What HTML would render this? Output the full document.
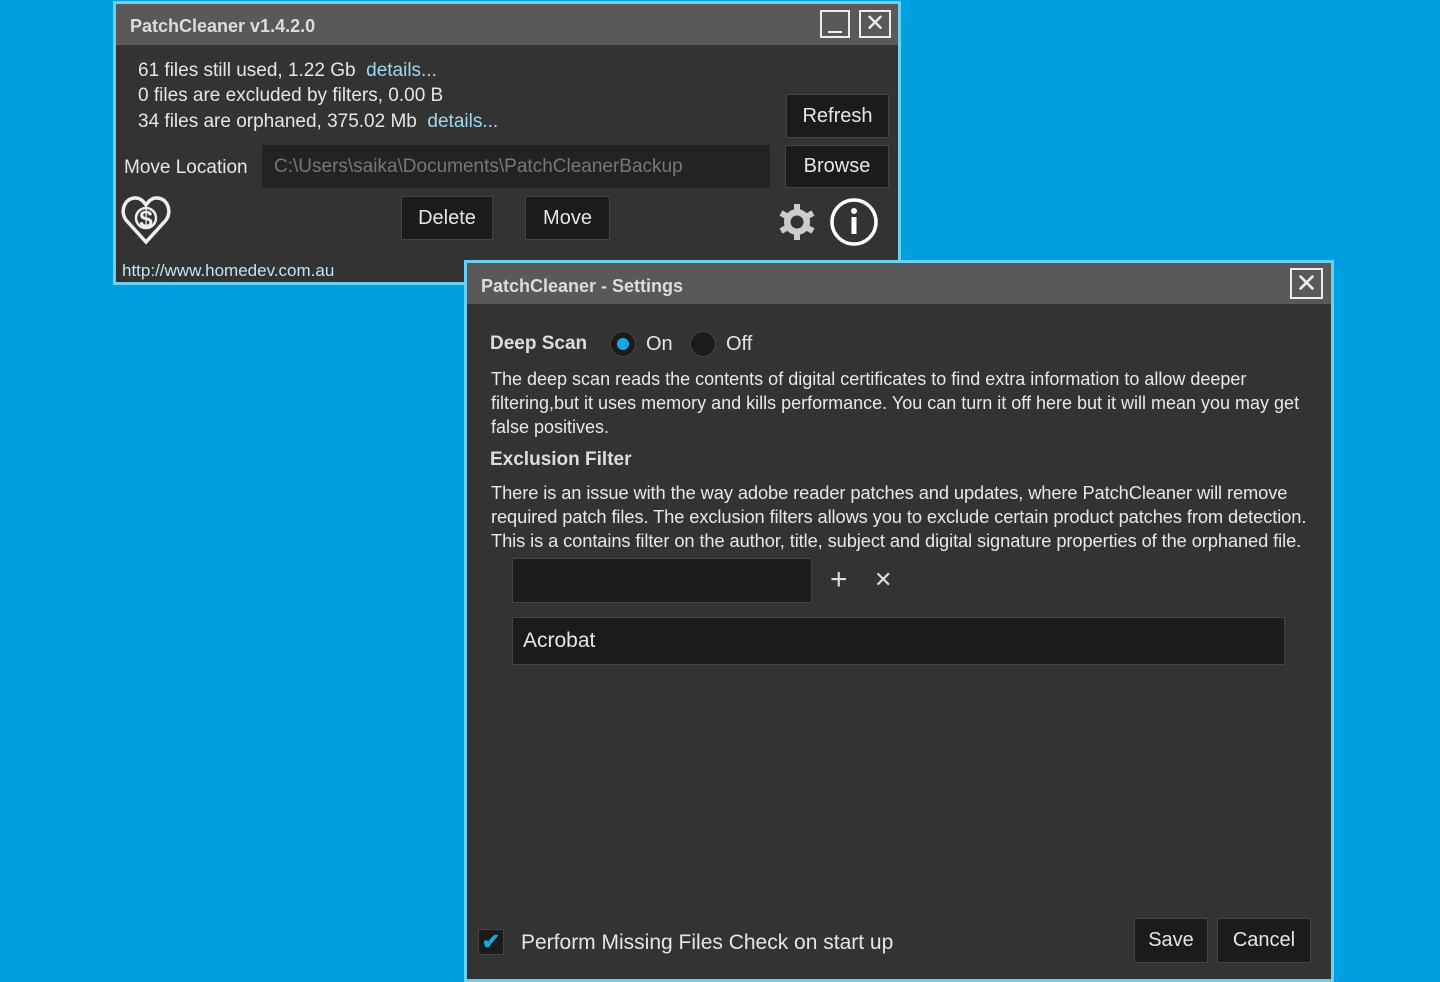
<!DOCTYPE html>
<html><head><style>
body{margin:0;width:1440px;height:980px;background:#009fe0;position:relative;overflow:hidden;font-family:"Liberation Sans",sans-serif;color:#e6e6e6}
.a{position:absolute}
.win{position:absolute;background:#333;border:3px solid #6cd0f2;box-sizing:border-box}
.tb{position:absolute;left:0;right:0;top:0;height:41px;background:#595959;color:#ddd;font-size:18px;font-weight:bold}
.btn{position:absolute;background:#1b1b1b;border:1px solid #444;color:#e6e6e6;font-size:20px;display:flex;align-items:center;justify-content:center;box-sizing:border-box}
.lnk{color:#9fd8ef}
.t{position:absolute;font-size:19px;white-space:nowrap}
.p{position:absolute;font-size:18px;line-height:24px;color:#e8e8e8;white-space:nowrap}
</style></head><body>
<div class="win" style="left:113px;top:1px;width:788px;height:284px">
 <div class="tb"><span class="a" style="left:14px;top:12px">PatchCleaner v1.4.2.0</span>
  <div class="a" style="left:704px;top:6px;width:30px;height:28px;border:2px solid #eee;box-sizing:border-box"><div class="a" style="left:6px;bottom:3px;width:14px;height:2px;background:#eee"></div></div>
  <div class="a" style="left:743px;top:6px;width:32px;height:28px;border:2px solid #eee;box-sizing:border-box;color:#eee;font-size:24px;line-height:24px;text-align:center;font-weight:normal">✕</div>
 </div>
 <div class="t" style="left:22px;top:56px">61 files still used, 1.22 Gb &nbsp;<span class="lnk">details...</span></div>
 <div class="t" style="left:22px;top:81px">0 files are excluded by filters, 0.00 B</div>
 <div class="t" style="left:22px;top:107px">34 files are orphaned, 375.02 Mb &nbsp;<span class="lnk">details...</span></div>
 <div class="btn" style="left:670px;top:90px;width:103px;height:44px">Refresh</div>
 <div class="t" style="left:8px;top:153px">Move Location</div>
 <div class="a" style="left:146px;top:141px;width:508px;height:43px;background:#232323;color:#777;font-size:19px;line-height:43px;padding-left:12px;box-sizing:border-box;white-space:nowrap;overflow:hidden">C:\Users\saika\Documents\PatchCleanerBackup</div>
 <div class="btn" style="left:669px;top:141px;width:104px;height:43px">Browse</div>
 <div class="btn" style="left:285px;top:192px;width:92px;height:44px">Delete</div>
 <div class="btn" style="left:409px;top:192px;width:85px;height:44px">Move</div>
 <svg class="a" style="left:5px;top:190px" width="50" height="52" viewBox="0 0 50 52"><path d="M25 48 L5 26 C-2 16 5 3 15 4 C20 4 23 8 25 11 C27 8 30 4 35 4 C45 3 52 16 45 26 Z" fill="none" stroke="#eee" stroke-width="3.5"/><text x="25" y="33" font-size="24" font-weight="bold" fill="#eee" text-anchor="middle" font-family="Liberation Sans">$</text><circle cx="25" cy="24" r="10" fill="none" stroke="#eee" stroke-width="2.5"/></svg>
 <svg class="a" style="left:661px;top:197px" width="40" height="42" viewBox="0 0 40 42"><g fill="#ccc"><circle cx="20" cy="21" r="13"/><g stroke="#ccc" stroke-width="6"><line x1="20" y1="3" x2="20" y2="39"/><line x1="4" y1="12" x2="36" y2="30"/><line x1="4" y1="30" x2="36" y2="12"/></g></g><circle cx="20" cy="21" r="6.5" fill="#333"/></svg>
 <svg class="a" style="left:713px;top:193px" width="50" height="50" viewBox="0 0 50 50"><circle cx="25" cy="25" r="22" fill="none" stroke="#fff" stroke-width="3.5"/><circle cx="25" cy="14" r="3" fill="#fff"/><rect x="22.5" y="20" width="5" height="17" fill="#fff"/></svg>
 <div class="t lnk" style="left:6px;top:257px;font-size:17px;color:#bfe6f6">http://www.homedev.com.au</div>
</div>

<div class="win" style="left:464px;top:260px;width:870px;height:722px">
 <div class="tb"><span class="a" style="left:14px;top:13px">PatchCleaner - Settings</span>
  <div class="a" style="left:823px;top:5px;width:33px;height:31px;border:2px solid #eee;box-sizing:border-box;color:#eee;font-size:26px;line-height:27px;text-align:center;font-weight:normal">✕</div>
 </div>
 <div class="t" style="left:23px;top:70px;font-weight:bold;color:#ddd">Deep Scan</div>
 <div class="a" style="left:143px;top:68px;width:26px;height:26px;border-radius:50%;background:#1b1b1b;border:1px solid #444;box-sizing:border-box"><div class="a" style="left:6px;top:6px;width:12px;height:12px;border-radius:50%;background:#1aa5e0"></div></div>
 <div class="t" style="left:179px;top:70px;font-size:20px">On</div>
 <div class="a" style="left:223px;top:68px;width:26px;height:26px;border-radius:50%;background:#1b1b1b;border:1px solid #444;box-sizing:border-box"></div>
 <div class="t" style="left:259px;top:70px;font-size:20px">Off</div>
 <div class="p" style="left:24px;top:104px">The deep scan reads the contents of digital certificates to find extra information to allow deeper<br>filtering,but it uses memory and kills performance. You can turn it off here but it will mean you may get<br>false positives.</div>
 <div class="t" style="left:23px;top:186px;font-weight:bold;color:#ddd">Exclusion Filter</div>
 <div class="p" style="left:24px;top:218px;font-size:18.3px;letter-spacing:-0.1px">There is an issue with the way adobe reader patches and updates, where PatchCleaner will remove<br>required patch files. The exclusion filters allows you to exclude certain product patches from detection.<br>This is a contains filter on the author, title, subject and digital signature properties of the orphaned file.</div>
 <div class="a" style="left:45px;top:295px;width:300px;height:45px;background:#1b1b1b;border:1px solid #444;box-sizing:border-box"></div>
 <div class="t" style="left:363px;top:300px;font-size:30px;font-weight:300;color:#ddd">+</div>
 <div class="t" style="left:407px;top:304px;font-size:22px;color:#ddd">✕</div>
 <div class="a" style="left:45px;top:354px;width:773px;height:48px;background:#1b1b1b;border:1px solid #444;box-sizing:border-box;font-size:21px;line-height:46px;padding-left:10px">Acrobat</div>
 <div class="a" style="left:11px;top:666px;width:26px;height:26px;background:#1b1b1b;border:1px solid #444;box-sizing:border-box;color:#1aa5e0;font-size:22px;line-height:24px;text-align:center;font-weight:bold">✔</div>
 <div class="t" style="left:54px;top:668px;font-size:21px">Perform Missing Files Check on start up</div>
 <div class="btn" style="left:667px;top:655px;width:74px;height:45px">Save</div>
 <div class="btn" style="left:750px;top:655px;width:94px;height:45px">Cancel</div>
</div>
</body></html>
